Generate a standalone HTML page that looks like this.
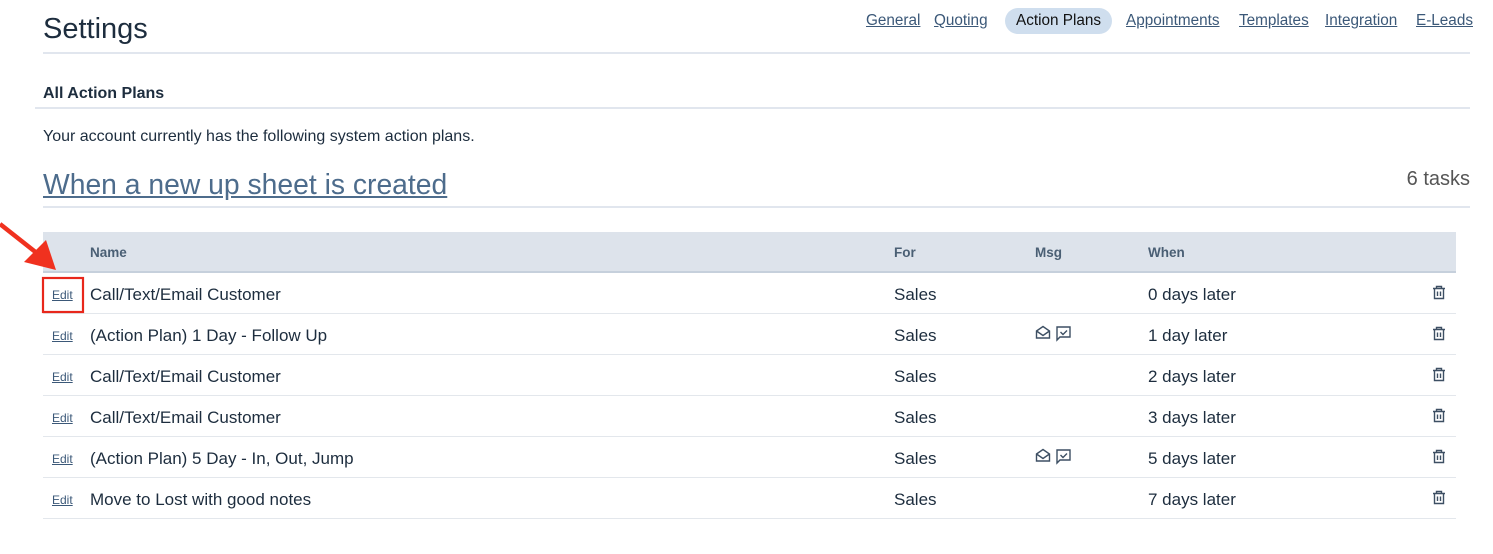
<!DOCTYPE html>
<html><head><style>
body{margin:0;width:1493px;height:554px;background:#fff;font-family:"Liberation Sans",sans-serif;color:#1d2d3e;position:relative;overflow:hidden}
.a{position:absolute;white-space:nowrap}
a{color:#3b5878;text-decoration:underline}
.hr{position:absolute;height:2px;background:#e1e6ee}
.row{position:absolute;left:43px;width:1413px;height:40px;border-bottom:1px solid #e3e7ec}
.row span{position:absolute;top:12px;font-size:17px}
.row .e{left:9px;top:15px;font-size:12px}
</style></head><body>
<div class="a" style="left:43px;top:13px;font-size:29px">Settings</div>
<div class="a" style="left:866px;top:12px;font-size:15.3px">
<a style="position:absolute;left:0">General</a>
<a style="position:absolute;left:68px">Quoting</a>
<span style="position:absolute;left:139px;top:-4px;background:#cfdeee;border-radius:13px;padding:4px 11px;color:#111">Action Plans</span>
<a style="position:absolute;left:260px">Appointments</a>
<a style="position:absolute;left:373px">Templates</a>
<a style="position:absolute;left:459px">Integration</a>
<a style="position:absolute;left:550px">E-Leads</a>
</div>
<div class="hr" style="left:43px;top:52px;width:1427px"></div>
<div class="a" style="left:43px;top:85px;font-size:16px;font-weight:bold">All Action Plans</div>
<div class="hr" style="left:35px;top:107px;width:1435px"></div>
<div class="a" style="left:43px;top:128px;font-size:16px">Your account currently has the following system action plans.</div>
<div class="a" style="left:43px;top:168px;font-size:28.3px"><a style="color:#4d6c8c">When a new up sheet is created</a></div>
<div class="a" style="right:23px;top:168px;font-size:20px;color:#555">6 tasks</div>
<div class="hr" style="left:43px;top:206px;width:1427px"></div>
<div class="a" style="left:43px;top:232px;width:1413px;height:39px;background:#dde3eb;border-bottom:2px solid #c6d0dc;font-size:13.5px;font-weight:bold;color:#4a5f74">
<span class="a" style="left:47px;top:13px">Name</span><span class="a" style="left:851px;top:13px">For</span><span class="a" style="left:992px;top:13px">Msg</span><span class="a" style="left:1105px;top:13px">When</span></div>
<div class="row" style="top:273px"><span class="e"><a>Edit</a></span><span style="left:47px">Call/Text/Email Customer</span><span style="left:851px">Sales</span><span style="left:1105px">0 days later</span></div>
<div class="row" style="top:314px"><span class="e"><a>Edit</a></span><span style="left:47px">(Action Plan) 1 Day - Follow Up</span><span style="left:851px">Sales</span><span style="left:1105px">1 day later</span></div>
<div class="row" style="top:355px"><span class="e"><a>Edit</a></span><span style="left:47px">Call/Text/Email Customer</span><span style="left:851px">Sales</span><span style="left:1105px">2 days later</span></div>
<div class="row" style="top:396px"><span class="e"><a>Edit</a></span><span style="left:47px">Call/Text/Email Customer</span><span style="left:851px">Sales</span><span style="left:1105px">3 days later</span></div>
<div class="row" style="top:437px"><span class="e"><a>Edit</a></span><span style="left:47px">(Action Plan) 5 Day - In, Out, Jump</span><span style="left:851px">Sales</span><span style="left:1105px">5 days later</span></div>
<div class="row" style="top:478px"><span class="e"><a>Edit</a></span><span style="left:47px">Move to Lost with good notes</span><span style="left:851px">Sales</span><span style="left:1105px">7 days later</span></div>
<svg class="a" style="left:0;top:0" width="1493" height="554" fill="none" stroke="#3d4f63" stroke-width="1.4">
<defs><g id="t"><path d="M-6 -4.5h12M-2.5 -4.5v-2h5v2M-4.5 -4.5v10h9v-10M-1.5 -1.5v4.5M1.5 -1.5v4.5"/></g>
<g id="m"><path d="M-6.5 -2l6.5-4.5 6.5 4.5v7h-13z M-6.5 -2l6.5 4.5 6.5-4.5"/><path d="M14 -6h13v10h-10l-3 3z M17.5 -1l2.5 2.5 4-4"/></g></defs>
<use href="#t" x="1439" y="293"/><use href="#t" x="1439" y="334"/><use href="#t" x="1439" y="375"/><use href="#t" x="1439" y="416"/><use href="#t" x="1439" y="457"/><use href="#t" x="1439" y="498"/>
<use href="#m" x="1043" y="333"/><use href="#m" x="1043" y="456"/>
<rect x="43" y="278" width="40" height="34" stroke="#e8271b" stroke-width="2.2"/>
<path d="M0 224L38 254" stroke="#f0311f" stroke-width="4.5"/>
<path d="M56 270L24 262L46 240Z" fill="#f0311f" stroke="none"/>
</svg>
</body></html>
